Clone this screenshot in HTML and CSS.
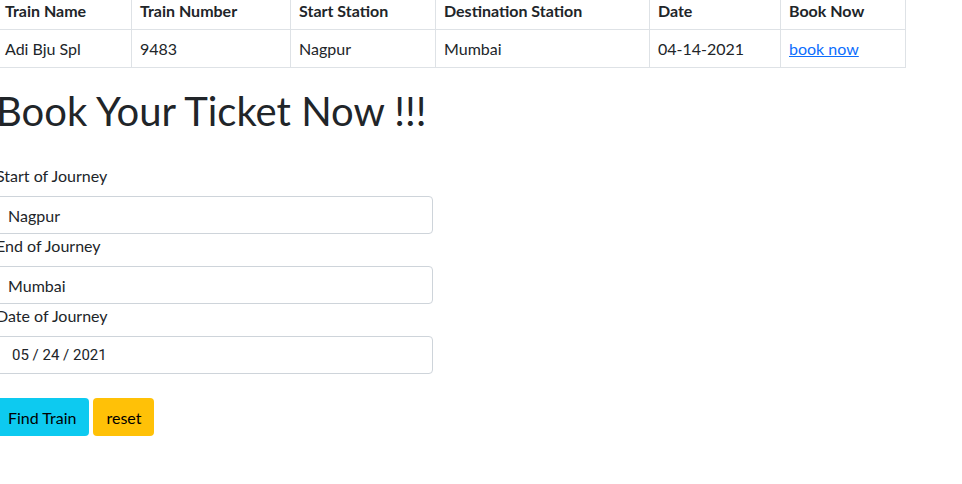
FILE: index.html
```html
<!DOCTYPE html>
<html lang="en">
<head>
<meta charset="utf-8">
<title>Book Ticket</title>
<link rel="stylesheet" href="styles.css">
</head>
<body>
<div class="page">
  <table class="trains">
    <colgroup>
      <col class="c1"><col class="c2"><col class="c3"><col class="c4"><col class="c5"><col class="c6">
    </colgroup>
    <thead>
      <tr>
        <th>Train Name</th>
        <th>Train Number</th>
        <th>Start Station</th>
        <th>Destination Station</th>
        <th>Date</th>
        <th>Book Now</th>
      </tr>
    </thead>
    <tbody>
      <tr>
        <td>Adi Bju Spl</td>
        <td>9483</td>
        <td>Nagpur</td>
        <td>Mumbai</td>
        <td>04-14-2021</td>
        <td><a href="#" class="book-link">book now</a></td>
      </tr>
    </tbody>
  </table>

  <h1 class="title">Book Your Ticket Now !!!</h1>

  <form class="form">
    <label class="label" for="start">Start of Journey</label>
    <input class="field" id="start" type="text" value="Nagpur">
    <label class="label" for="end">End of Journey</label>
    <input class="field" id="end" type="text" value="Mumbai">
    <label class="label" for="date">Date of Journey</label>
    <input class="field field-date" id="date" type="text" value="05 / 24 / 2021">
    <div class="actions">
      <button type="button" class="btn btn-info">Find Train</button>
      <button type="reset" class="btn btn-warning">reset</button>
    </div>
  </form>
</div>
</body>
</html>
```
FILE: styles.css
```css
* { box-sizing: border-box; }

body {
  margin: 0;
  font-family: Lato, "Noto Sans", sans-serif;
  font-size: 16px;
  color: #212529;
  background: #fff;
}

.page {
  margin-left: -4px;
}

.trains {
  border-collapse: collapse;
  table-layout: fixed;
  width: 909px;
  margin-top: -9px;
}

.c1 { width: 135px; }
.c2 { width: 159px; }
.c3 { width: 145px; }
.c4 { width: 214px; }
.c5 { width: 131px; }
.c6 { width: 125px; }

.trains th,
.trains td {
  border: 1px solid #dee2e6;
  padding: 7px 8px;
  line-height: 23px;
  text-align: left;
  white-space: nowrap;
}

.trains th {
  font-weight: 700;
}

.book-link {
  color: #0d6efd;
  text-decoration: underline;
}

.title {
  font-size: 40px;
  line-height: 48px;
  font-weight: 400;
  margin: 19px 0 29px;
}

.form {
  display: flex;
  flex-direction: column;
  align-items: flex-start;
}

.label {
  display: block;
  line-height: 24px;
  margin-bottom: 8px;
}

.field {
  display: block;
  width: 438px;
  height: 38px;
  margin-left: -1px;
  padding: 0 12px;
  border: 1px solid #ced4da;
  border-radius: 4px;
  font-family: Lato, "Noto Sans", sans-serif;
  font-size: 16px;
  color: #212529;
  background: #fff;
}

.field-date {
  padding-left: 16px;
  font-family: Roboto, "Noto Sans", sans-serif;
  font-size: 15px;
}

.actions {
  display: flex;
  gap: 4px;
  margin-top: 24px;
}

.btn {
  height: 38px;
  padding: 0 12px;
  border: none;
  border-radius: 4px;
  font-family: Lato, "Noto Sans", sans-serif;
  font-size: 16px;
  color: #000;
  cursor: pointer;
}

.btn-info { background: #0dcaf0; padding-right: 13px; }
.btn-warning { background: #ffc107; padding: 0 13px; }
```
